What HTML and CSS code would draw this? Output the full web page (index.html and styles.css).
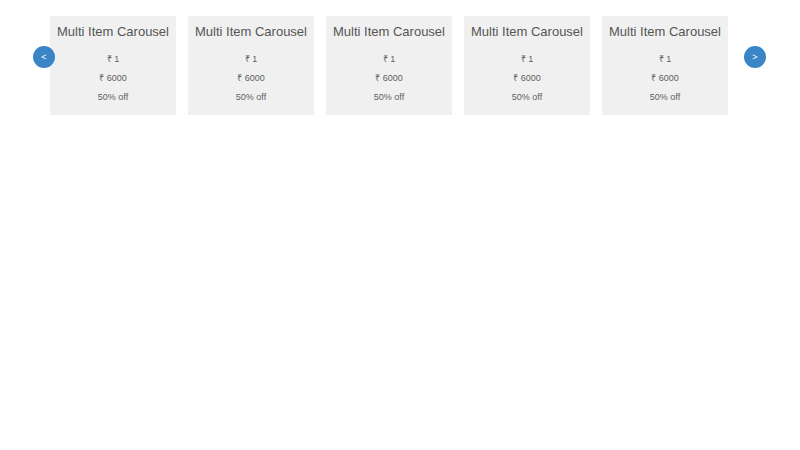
FILE: index.html
```html
<!DOCTYPE html>
<html>
<head>
<meta charset="utf-8">
<link rel="stylesheet" href="styles.css">
</head>
<body>
<div class="carousel">
  <div class="track">
    <div class="card"><div class="title">Multi Item Carousel</div><p>₹ 1</p><p>₹ 6000</p><p>50% off</p></div>
    <div class="card"><div class="title">Multi Item Carousel</div><p>₹ 1</p><p>₹ 6000</p><p>50% off</p></div>
    <div class="card"><div class="title">Multi Item Carousel</div><p>₹ 1</p><p>₹ 6000</p><p>50% off</p></div>
    <div class="card"><div class="title">Multi Item Carousel</div><p>₹ 1</p><p>₹ 6000</p><p>50% off</p></div>
    <div class="card"><div class="title">Multi Item Carousel</div><p>₹ 1</p><p>₹ 6000</p><p>50% off</p></div>
  </div>
  <button class="nav prev">&lt;</button>
  <button class="nav next">&gt;</button>
</div>
</body>
</html>
```
FILE: styles.css
```css
html, body {
  margin: 0;
  padding: 0;
  background: #fff;
  font-family: "Liberation Sans", Arial, sans-serif;
  color: #555;
}
.carousel {
  position: relative;
  width: 800px;
  padding-top: 16px;
}
.track {
  display: flex;
  gap: 12px;
  padding-left: 50px;
}
.card {
  width: 126px;
  height: 99px;
  background: #f0f0f0;
  text-align: center;
  box-sizing: border-box;
  padding-top: 8px;
}
.title {
  font-size: 13px;
  line-height: 16px;
  margin-bottom: 10px;
  white-space: nowrap;
}
.card p {
  margin: 0;
  font-size: 9px;
  line-height: 19px;
  color: #5e5e5e;
}
.nav {
  position: absolute;
  top: 46px;
  width: 22px;
  height: 22px;
  border-radius: 50%;
  border: none;
  background: #3a85c6;
  color: #fff;
  font-family: "Liberation Sans", Arial, sans-serif;
  font-size: 9px;
  line-height: 22px;
  padding: 0;
  text-align: center;
}
.prev { left: 33px; }
.next { left: 744px; }
```
